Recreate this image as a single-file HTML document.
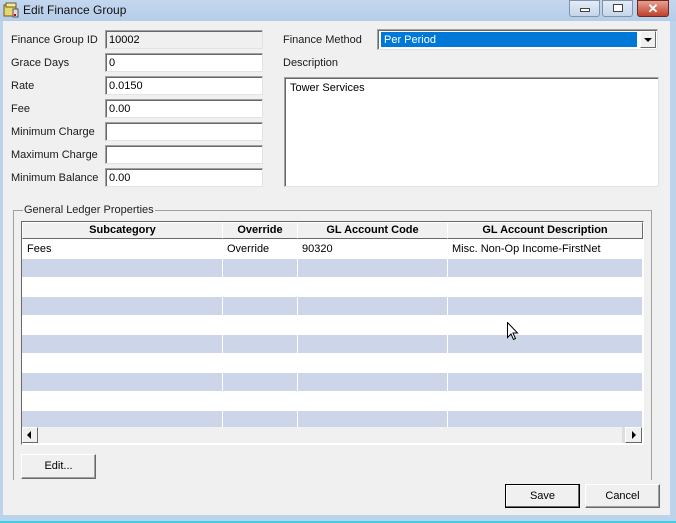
<!DOCTYPE html>
<html><head><style>
*{box-sizing:border-box;margin:0;padding:0}
body{width:676px;height:523px;overflow:hidden;background:#bcd3ea;font-family:"Liberation Sans",sans-serif;font-size:11px;color:#000;position:relative}
.a{position:absolute}
.title{left:0;top:0;width:676px;height:21px;background:linear-gradient(#c3d7ee,#b6cde9)}
.client{left:3px;top:21px;width:667px;height:494px;background:#f0f0f0}
.lbl{position:absolute;font-size:11px;color:#1a1a1a}
.inp{position:absolute;left:105px;width:158px;height:19px;background:#fff;border:1px solid #a0a0a0;border-right-color:#e3e3e3;border-bottom-color:#e3e3e3;box-shadow:inset 1px 1px 0 #696969;padding:3px 0 0 3px}
.btn{position:absolute;background:#f0f0f0;border:1px solid #fff;border-right-color:#696969;border-bottom-color:#696969;box-shadow:inset -1px -1px 0 #a0a0a0;text-align:center;line-height:22px}
.row{position:absolute;left:22px;width:620px}
.hdr{position:absolute;top:222px;height:17px;background:#f0f0f0;border:1px solid #fff;border-right-color:#696969;border-bottom-color:#696969;font-weight:bold;text-align:center;line-height:15px}
.vl{position:absolute;top:239px;width:1px;height:188px;background:#fff}
</style></head><body>
<div class="a title"></div>
<svg class="a" style="left:3px;top:2px" width="16" height="16" viewBox="0 0 16 16"><rect x="1" y="3" width="12" height="11" fill="#e8d66a" stroke="#6b5a20"/><rect x="3" y="1" width="10" height="4" fill="#f4e9a0" stroke="#6b5a20"/><rect x="10" y="7" width="5" height="8" fill="#ddd" stroke="#555"/><rect x="11" y="12" width="2" height="2" fill="#c00"/></svg>
<div class="a" style="left:23px;top:3px;font-size:12px;color:#111">Edit Finance Group</div>
<div class="a" style="left:569px;top:0;width:31px;height:17px;border:1px solid #7f93ad;border-radius:0 0 3px 3px;background:linear-gradient(#e4ecf6,#c5d5e9)"><div class="a" style="left:10px;top:7px;width:10px;height:4px;border:1px solid #444;background:#fff"></div></div>
<div class="a" style="left:602px;top:0;width:31px;height:17px;border:1px solid #7f93ad;border-radius:0 0 3px 3px;background:linear-gradient(#e4ecf6,#c5d5e9)"><div class="a" style="left:10px;top:3px;width:10px;height:8px;border:1px solid #444;background:#fff"></div></div>
<div class="a" style="left:637px;top:0;width:32px;height:17px;border:1px solid #6b2a20;border-radius:0 0 3px 3px;background:linear-gradient(#e8a090,#c0402c);color:#fff;font-weight:bold;font-size:13px;text-align:center;line-height:15px">✕</div>
<div class="a client"></div>
<div class="a" style="left:0;top:519px;width:676px;height:4px;background:#bcd3ea;border-bottom:2px solid #3ad0e6"></div>

<div class="lbl" style="left:11px;top:34px">Finance Group ID</div>
<div class="lbl" style="left:11px;top:57px">Grace Days</div>
<div class="lbl" style="left:11px;top:80px">Rate</div>
<div class="lbl" style="left:11px;top:103px">Fee</div>
<div class="lbl" style="left:11px;top:126px">Minimum Charge</div>
<div class="lbl" style="left:11px;top:149px">Maximum Charge</div>
<div class="lbl" style="left:11px;top:172px">Minimum Balance</div>
<div class="inp" style="top:30px;background:#f0f0f0">10002</div>
<div class="inp" style="top:53px">0</div>
<div class="inp" style="top:76px">0.0150</div>
<div class="inp" style="top:99px">0.00</div>
<div class="inp" style="top:122px"></div>
<div class="inp" style="top:145px"></div>
<div class="inp" style="top:168px">0.00</div>

<div class="lbl" style="left:283px;top:34px">Finance Method</div>
<div class="a" style="left:377px;top:29px;width:281px;height:21px;background:#fff;border:1px solid #a0a0a0;border-right-color:#e3e3e3;border-bottom-color:#e3e3e3;box-shadow:inset 1px 1px 0 #696969"></div>
<div class="a" style="left:381px;top:32px;width:256px;height:15px;background:#0078d7;color:#fff;padding:2px 0 0 3px">Per Period</div>
<div class="a" style="left:640px;top:31px;width:16px;height:17px;background:#f0f0f0;border:1px solid #fff;border-right-color:#696969;border-bottom-color:#696969"><div class="a" style="left:3px;top:6px;border-left:4px solid transparent;border-right:4px solid transparent;border-top:4px solid #000"></div></div>
<div class="lbl" style="left:283px;top:57px">Description</div>
<div class="a" style="left:284px;top:77px;width:375px;height:110px;background:#fff;border:1px solid #a0a0a0;border-right-color:#e3e3e3;border-bottom-color:#e3e3e3;box-shadow:inset 1px 1px 0 #696969;padding:4px 0 0 5px">Tower Services</div>

<div class="a" style="left:13px;top:210px;width:639px;height:270px;border:1px solid #a0a0a0;border-bottom:none"></div>
<div class="a" style="left:23px;top:204px;background:#f0f0f0;padding:0 1px;color:#222">General Ledger Properties</div>

<div class="a" style="left:21px;top:221px;width:623px;height:224px;border:1px solid #696969;border-right-color:#fff;border-bottom-color:#fff;background:#fff"></div>
<div class="row" style="top:259px;height:18px;background:#cdd6e8"></div>
<div class="row" style="top:297px;height:18px;background:#cdd6e8"></div>
<div class="row" style="top:335px;height:18px;background:#cdd6e8"></div>
<div class="row" style="top:373px;height:18px;background:#cdd6e8"></div>
<div class="row" style="top:411px;height:16px;background:#cdd6e8"></div>
<div class="vl" style="left:222px"></div><div class="vl" style="left:297px"></div><div class="vl" style="left:447px"></div>
<div class="hdr" style="left:22px;width:201px">Subcategory</div>
<div class="hdr" style="left:222px;width:76px">Override</div>
<div class="hdr" style="left:297px;width:151px">GL Account Code</div>
<div class="hdr" style="left:447px;width:196px">GL Account Description</div>
<div class="a" style="left:27px;top:243px">Fees</div>
<div class="a" style="left:227px;top:243px">Override</div>
<div class="a" style="left:302px;top:243px">90320</div>
<div class="a" style="left:452px;top:243px">Misc. Non-Op Income-FirstNet</div>
<div class="a" style="left:22px;top:427px;width:620px;height:16px;background:#f0f0f0"></div>
<div class="a" style="left:22px;top:427px;width:16px;height:16px;border:1px solid #fff;border-right-color:#696969;border-bottom-color:#696969"><div class="a" style="left:4px;top:3px;border-top:4px solid transparent;border-bottom:4px solid transparent;border-right:4px solid #000"></div></div>
<div class="a" style="left:622px;top:427px;width:3px;height:16px;background:#ddd"></div>
<div class="a" style="left:625px;top:427px;width:17px;height:16px;border:1px solid #fff;border-right-color:#696969;border-bottom-color:#696969"><div class="a" style="left:6px;top:3px;border-top:4px solid transparent;border-bottom:4px solid transparent;border-left:4px solid #000"></div></div>

<div class="btn" style="left:21px;top:454px;width:75px;height:25px">Edit...</div>
<div class="btn" style="left:505px;top:484px;width:75px;height:24px;border:1px solid #000;box-shadow:inset -1px -1px 0 #696969,inset 1px 1px 0 #fff">Save</div>
<div class="btn" style="left:585px;top:484px;width:75px;height:24px">Cancel</div>
<svg class="a" style="left:507px;top:322px" width="12" height="20" viewBox="0 0 12 20"><path d="M0.5 0.5V15.5L4 12L6.5 17.5L8.5 16.5L6 11H10.5Z" fill="#fff" stroke="#000"/></svg>
</body></html>
